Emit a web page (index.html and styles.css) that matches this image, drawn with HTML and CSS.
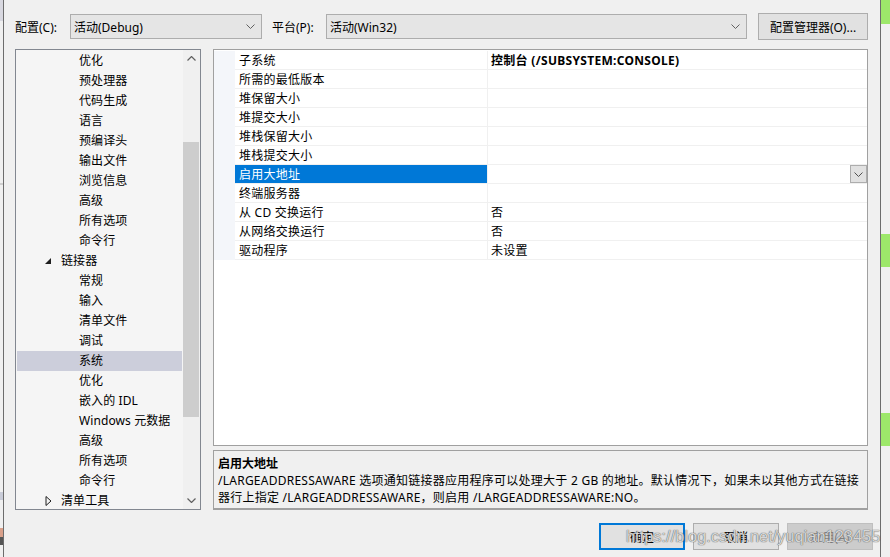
FILE: index.html
```html
<!DOCTYPE html>
<html lang="zh-CN">
<head>
<meta charset="utf-8">
<title>属性页</title>
<link rel="stylesheet" href="styles.css">
</head>
<body>
<div class="screen">
  <div class="edge-left">
    <div class="el-top"></div>
    <div class="el-gap1"></div>
    <div class="el-line"></div>
    <div class="el-gap2"></div>
    <div class="el-blue"></div>
    <div class="el-gap3"></div>
    <div class="el-red"></div>
    <div class="el-dark"></div>
  </div>
  <div class="frame-line"></div>

  <div class="dialog">
    <div class="toolbar">
      <span class="lbl lbl-cfg">配置(C):</span>
      <div class="combo combo-cfg">
        <span>活动(Debug)</span>
        <svg class="chev" width="9" height="5" viewBox="0 0 9 5"><path d="M0.5 0.5 L4.5 4.5 L8.5 0.5" fill="none" stroke="#606060" stroke-width="1"/></svg>
      </div>
      <span class="lbl lbl-plat">平台(P):</span>
      <div class="combo combo-plat">
        <span>活动(Win32)</span>
        <svg class="chev" width="9" height="5" viewBox="0 0 9 5"><path d="M0.5 0.5 L4.5 4.5 L8.5 0.5" fill="none" stroke="#606060" stroke-width="1"/></svg>
      </div>
      <button class="btn btn-mgr">配置管理器(O)...</button>
    </div>

    <div class="main">
      <div class="tree">
        <div class="tree-list">
          <div class="ti child">优化</div>
          <div class="ti child">预处理器</div>
          <div class="ti child">代码生成</div>
          <div class="ti child">语言</div>
          <div class="ti child">预编译头</div>
          <div class="ti child">输出文件</div>
          <div class="ti child">浏览信息</div>
          <div class="ti child">高级</div>
          <div class="ti child">所有选项</div>
          <div class="ti child">命令行</div>
          <div class="ti parent"><svg class="tri" width="7" height="7" viewBox="0 0 7 7"><path d="M6 0 L6 6 L0 6 Z" fill="#1e1e1e"/></svg>链接器</div>
          <div class="ti child">常规</div>
          <div class="ti child">输入</div>
          <div class="ti child">清单文件</div>
          <div class="ti child">调试</div>
          <div class="ti child sel">系统</div>
          <div class="ti child">优化</div>
          <div class="ti child">嵌入的 IDL</div>
          <div class="ti child">Windows 元数据</div>
          <div class="ti child">高级</div>
          <div class="ti child">所有选项</div>
          <div class="ti child">命令行</div>
          <div class="ti parent"><svg class="tri" width="7" height="10" viewBox="0 0 7 10"><path d="M1 0.5 L6 5 L1 9.5 Z" fill="none" stroke="#1e1e1e" stroke-width="1"/></svg>清单工具</div>
        </div>
        <div class="vscroll">
          <div class="sb-arrow"><svg width="9" height="5" viewBox="0 0 9 5"><path d="M0.5 4.5 L4.5 0.5 L8.5 4.5" fill="none" stroke="#606060" stroke-width="1.2"/></svg></div>
          <div class="sb-thumb"></div>
          <div class="sb-fill"></div>
          <div class="sb-arrow"><svg width="9" height="5" viewBox="0 0 9 5"><path d="M0.5 0.5 L4.5 4.5 L8.5 0.5" fill="none" stroke="#606060" stroke-width="1.2"/></svg></div>
        </div>
      </div>

      <div class="right">
        <div class="grid">
          <div class="row"><div class="gut"></div><div class="name">子系统</div><div class="val bold">控制台 (/SUBSYSTEM:CONSOLE)</div></div>
          <div class="row"><div class="gut"></div><div class="name">所需的最低版本</div><div class="val"></div></div>
          <div class="row"><div class="gut"></div><div class="name">堆保留大小</div><div class="val"></div></div>
          <div class="row"><div class="gut"></div><div class="name">堆提交大小</div><div class="val"></div></div>
          <div class="row"><div class="gut"></div><div class="name">堆栈保留大小</div><div class="val"></div></div>
          <div class="row"><div class="gut"></div><div class="name">堆栈提交大小</div><div class="val"></div></div>
          <div class="row selrow"><div class="gut"></div><div class="name">启用大地址</div><div class="val"><span></span><span class="dd"><svg width="9" height="5" viewBox="0 0 9 5"><path d="M0.5 0.5 L4.5 4.5 L8.5 0.5" fill="none" stroke="#505050" stroke-width="1"/></svg></span></div></div>
          <div class="row"><div class="gut"></div><div class="name">终端服务器</div><div class="val"></div></div>
          <div class="row"><div class="gut"></div><div class="name">从 CD 交换运行</div><div class="val">否</div></div>
          <div class="row"><div class="gut"></div><div class="name">从网络交换运行</div><div class="val">否</div></div>
          <div class="row"><div class="gut"></div><div class="name">驱动程序</div><div class="val">未设置</div></div>
        </div>
        <div class="desc">
          <div class="desc-title">启用大地址</div>
          <div class="desc-text">/LARGEADDRESSAWARE 选项通知链接器应用程序可以处理大于 2 GB 的地址。默认情况下，如果未以其他方式在链接<br>器行上指定 /LARGEADDRESSAWARE，则启用 /LARGEADDRESSAWARE:NO。</div>
        </div>
      </div>
    </div>

    <div class="buttons">
      <button class="btn btn-ok">确定</button>
      <button class="btn">取消</button>
      <button class="btn btn-dis">应用(A)</button>
      <span class="watermark">https://blog.csdn.net/yuqian123455</span>
    </div>
  </div>

  <div class="frame-line"></div>
  <div class="edge-right">
    <div class="er-green er-g1"></div>
    <div class="er-gap er-s1"></div>
    <div class="er-green er-g2"></div>
    <div class="er-gap er-s2"></div>
    <div class="er-green er-g3"></div>
  </div>
</div>
</body>
</html>
```

FILE: styles.css
```css
* { box-sizing: border-box; }
html, body {
  margin: 0;
  padding: 0;
  background: #f0f0f0;
  font-family: "Noto Sans", "Noto Sans CJK SC", sans-serif;
  font-size: 12px;
  color: #000;
}
.screen {
  display: flex;
  width: 890px;
  height: 557px;
  overflow: hidden;
}

/* side strips (other windows) */
.edge-left {
  width: 3px;
  display: flex;
  flex-direction: column;
  background: #f0f0f0;
}
.el-top { height: 21px; background: #d8d8e0; }
.el-gap1 { height: 162px; }
.el-line { height: 2px; background: #cfcfcf; }
.el-gap2 { height: 307px; }
.el-blue { height: 8px; background: #c9ccd8; }
.el-gap3 { height: 28px; }
.el-red { height: 9px; background: #d9a08a; }
.el-dark { height: 8px; background: #555; }
.frame-line { width: 1px; background: #6c6c6c; }
.edge-right {
  width: 9px;
  display: flex;
  flex-direction: column;
}
.er-green { background: #9de86a; }
.er-g1 { height: 24px; }
.er-s1 { height: 210px; }
.er-g2 { height: 33px; }
.er-s2 { height: 146px; }
.er-g3 { height: 33px; }

/* dialog */
.dialog {
  width: 876px;
  padding: 13px 12px 0 11px;
  display: flex;
  flex-direction: column;
}
.toolbar {
  display: flex;
  align-items: center;
  height: 27px;
}
.lbl { white-space: nowrap; }
.lbl-cfg { width: 55px; }
.lbl-plat { width: 54px; margin-left: 10px; }
.combo {
  height: 25px;
  background: #e5e5e5;
  border: 1px solid #adadad;
  display: flex;
  align-items: center;
  justify-content: space-between;
  padding: 0 6px 0 3px;
}
.combo-cfg { width: 192px; }
.combo-plat { width: 421px; }
.chev { display: block; }
.btn {
  font-family: "Noto Sans", "Noto Sans CJK SC", sans-serif;
  font-size: 12px;
  color: #000;
  background: #e1e1e1;
  border: 1px solid #adadad;
  height: 27px;
  padding: 0;
  margin: 0;
}
.btn-mgr { width: 110px; margin-left: 11px; }

.main {
  display: flex;
  margin-top: 9px;
  height: 461px;
}
.tree {
  width: 186px;
  border: 1px solid #828790;
  background: #f5f5f5;
  display: flex;
}
.tree-list {
  flex: 1;
  padding: 1px 1px 0 1px;
  overflow: hidden;
}
.ti {
  height: 20px;
  line-height: 20px;
  white-space: nowrap;
  display: flex;
  align-items: center;
  letter-spacing: 0.1px;
}
.ti.child { padding-left: 62px; }
.ti.parent { padding-left: 28px; }
.ti.sel { background: #cccedb; }
.tri { margin-right: 9px; flex: none; }
.vscroll {
  width: 17px;
  background: #f0f0f0;
  display: flex;
  flex-direction: column;
}
.sb-arrow {
  height: 17px;
  display: flex;
  align-items: center;
  justify-content: center;
}
.sb-thumb {
  margin: 75px 1px 0 0;
  height: 275px;
  background: #cdcdcd;
}
.sb-fill { flex: 1; }

.right {
  margin-left: 12px;
  width: 655px;
  display: flex;
  flex-direction: column;
}
.grid {
  height: 398px;
  border: 1px solid #a0a0a0;
  background: #fff;
  padding-top: 1px;
  letter-spacing: 0.25px;
}
.row {
  display: grid;
  grid-template-columns: 21px 252px 1fr;
  height: 19px;
}
.gut { background: #f4f6fa; }
.name, .val {
  border-bottom: 1px solid #f0f0f0;
  line-height: 20px;
  white-space: nowrap;
  overflow: hidden;
}
.name { padding-left: 4px; }
.val {
  border-left: 1px solid #f0f0f0;
  padding-left: 3px;
  display: flex;
  justify-content: space-between;
}
.bold { font-weight: bold; letter-spacing: 0.3px; }
.selrow .name { background: #0078d7; color: #fff; }
.dd {
  width: 17px;
  height: 18px;
  background: #e1e1e1;
  border: 1px solid #adadad;
  display: flex;
  align-items: center;
  justify-content: center;
}
.desc {
  margin-top: 4px;
  height: 60px;
  border: 1px solid #a0a0a0;
  border-bottom-width: 2px;
  background: #f0f0f0;
  padding: 4px 4px 0 4px;
  line-height: 17px;
}
.desc-title { font-weight: bold; }
.desc-text { white-space: nowrap; letter-spacing: 0.25px; }

.buttons {
  position: relative;
  display: flex;
  justify-content: flex-end;
  gap: 8px;
  margin-top: 13px;
  margin-right: -5px;
}
.btn-ok { width: 86px; border: 2px solid #0078d7; }
.buttons .btn { width: 86px; }
.btn-dis { background: #cccccc; border-color: #bfbfbf; color: #838383; }
.watermark {
  position: absolute;
  left: 611px;
  top: 4px;
  font-family: "Liberation Sans", sans-serif;
  font-size: 16.4px;
  color: rgba(238, 238, 238, 0.85);
  text-shadow: 0 0 1px rgba(70, 70, 70, 0.9), 0 0 1px rgba(70, 70, 70, 0.6);
  pointer-events: none;
  white-space: nowrap;
}
```
